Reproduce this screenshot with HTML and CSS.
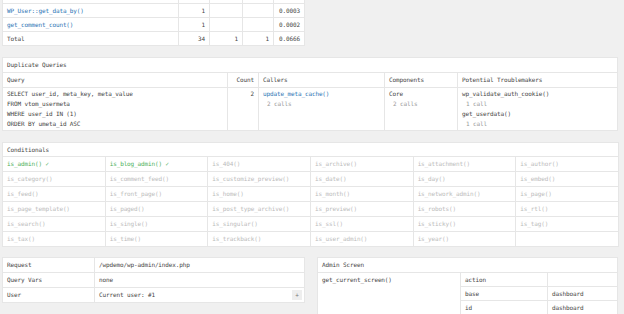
FILE: index.html
```html
<!DOCTYPE html>
<html lang="en">
<head>
    <meta charset="UTF-8">
    <title>Query Monitor</title>
    <link rel="stylesheet" href="styles.css">
</head>
<body>
    <div class="qm">
        <table class="panel callers-table">
            <colgroup>
                <col style="width: 176px">
                <col style="width: 31px">
                <col style="width: 33px">
                <col style="width: 31px">
                <col>
            </colgroup>
            <tbody>
                <tr class="scrolled">
                    <td></td>
                    <td></td>
                    <td></td>
                    <td></td>
                    <td></td>
                </tr>
                <tr>
                    <td><a href="#">WP_User::get_data_by()</a></td>
                    <td class="num">1</td>
                    <td></td>
                    <td></td>
                    <td class="num">0.0003</td>
                </tr>
                <tr>
                    <td><a href="#">get_comment_count()</a></td>
                    <td class="num">1</td>
                    <td></td>
                    <td></td>
                    <td class="num">0.0002</td>
                </tr>
                <tr>
                    <td>Total</td>
                    <td class="num">34</td>
                    <td class="num">1</td>
                    <td class="num">1</td>
                    <td class="num">0.0666</td>
                </tr>
            </tbody>
        </table>

        <table class="panel dupes">
            <colgroup>
                <col style="width: 225px">
                <col style="width: 31px">
                <col style="width: 126px">
                <col style="width: 73px">
                <col>
            </colgroup>
            <thead>
                <tr><th colspan="5" class="caption">Duplicate Queries</th></tr>
                <tr>
                    <th>Query</th>
                    <th class="num">Count</th>
                    <th>Callers</th>
                    <th>Components</th>
                    <th>Potential Troublemakers</th>
                </tr>
            </thead>
            <tbody>
                <tr>
                    <td class="sql">SELECT user_id, meta_key, meta_value<br>FROM vtom_usermeta<br>WHERE user_id IN (1)<br>ORDER BY umeta_id ASC</td>
                    <td class="sql num">2</td>
                    <td class="sql"><a href="#">update_meta_cache()</a><br><span class="calls">2 calls</span></td>
                    <td class="sql">Core<br><span class="calls">2 calls</span></td>
                    <td class="sql">wp_validate_auth_cookie()<br><span class="calls">1 call</span><br>get_userdata()<br><span class="calls">1 call</span></td>
                </tr>
            </tbody>
        </table>

        <table class="panel conditionals">
            <thead>
                <tr><th colspan="6" class="caption">Conditionals</th></tr>
            </thead>
            <tbody>
                <tr>
                    <td class="true">is_admin() ✓</td>
                    <td class="true">is_blog_admin() ✓</td>
                    <td>is_404()</td>
                    <td>is_archive()</td>
                    <td>is_attachment()</td>
                    <td>is_author()</td>
                </tr>
                <tr>
                    <td>is_category()</td>
                    <td>is_comment_feed()</td>
                    <td>is_customize_preview()</td>
                    <td>is_date()</td>
                    <td>is_day()</td>
                    <td>is_embed()</td>
                </tr>
                <tr>
                    <td>is_feed()</td>
                    <td>is_front_page()</td>
                    <td>is_home()</td>
                    <td>is_month()</td>
                    <td>is_network_admin()</td>
                    <td>is_page()</td>
                </tr>
                <tr>
                    <td>is_page_template()</td>
                    <td>is_paged()</td>
                    <td>is_post_type_archive()</td>
                    <td>is_preview()</td>
                    <td>is_robots()</td>
                    <td>is_rtl()</td>
                </tr>
                <tr>
                    <td>is_search()</td>
                    <td>is_single()</td>
                    <td>is_singular()</td>
                    <td>is_ssl()</td>
                    <td>is_sticky()</td>
                    <td>is_tag()</td>
                </tr>
                <tr>
                    <td>is_tax()</td>
                    <td>is_time()</td>
                    <td>is_trackback()</td>
                    <td>is_user_admin()</td>
                    <td>is_year()</td>
                    <td></td>
                </tr>
            </tbody>
        </table>

        <div class="bottom">
            <table class="panel request">
                <colgroup>
                    <col style="width: 92px">
                    <col>
                </colgroup>
                <tbody>
                    <tr><td>Request</td><td>/wpdemo/wp-admin/index.php</td></tr>
                    <tr><td>Query Vars</td><td>none</td></tr>
                    <tr>
                        <td>User</td>
                        <td><div class="user-row"><span>Current user: #1</span><span class="toggle">+</span></div></td>
                    </tr>
                </tbody>
            </table>

            <table class="panel screen">
                <colgroup>
                    <col style="width: 143px">
                    <col style="width: 87px">
                    <col>
                </colgroup>
                <thead>
                    <tr><th colspan="3" class="caption">Admin Screen</th></tr>
                </thead>
                <tbody>
                    <tr>
                        <td rowspan="3">get_current_screen()</td>
                        <td>action</td>
                        <td></td>
                    </tr>
                    <tr><td>base</td><td>dashboard</td></tr>
                    <tr><td>id</td><td>dashboard</td></tr>
                </tbody>
            </table>
        </div>
    </div>
</body>
</html>
```

FILE: styles.css
```css
* {
    margin: 0;
    padding: 0;
    box-sizing: border-box;
}

body {
    background-color: #f0f0f0;
    font-family: 'DejaVu Sans Mono', 'Liberation Mono', monospace;
    font-size: 6px;
    letter-spacing: -0.12px;
    color: #444;
    overflow: hidden;
}

.qm {
    padding-left: 2px;
}

a {
    color: #2a74b4;
    text-decoration: none;
}

.panel {
    background: #fff;
    border-collapse: collapse;
    table-layout: fixed;
}

.panel td,
.panel th {
    border: 1px solid #e6e6e6;
    padding: 3px 4px;
    line-height: 8px;
    font-weight: normal;
    text-align: left;
    vertical-align: top;
    white-space: nowrap;
    overflow: hidden;
}

.panel .num {
    text-align: right;
}

.panel .caption {
    color: #444;
}

/* caller totals */
.callers-table {
    width: 303px;
    margin-top: -11px;
}

.callers-table td {
    line-height: 7px;
}

.callers-table .scrolled td {
    height: 14px;
}

/* duplicate queries */
.dupes {
    width: 616px;
    margin-top: 11px;
}

.dupes td.sql {
    line-height: 10px;
    padding-top: 1px;
    padding-bottom: 1px;
}

.calls {
    color: #999;
    padding-left: 4px;
}

/* conditionals */
.conditionals {
    width: 617px;
    margin-top: 11px;
}

.conditionals .caption {
    padding-bottom: 2px;
}

.conditionals td {
    color: #bbb;
}

.conditionals td.true {
    color: #4cb05a;
}

/* request + admin screen */
.bottom {
    display: flex;
    align-items: flex-start;
    gap: 12px;
    margin-top: 10px;
}

.request {
    width: 303px;
}

.user-row {
    display: flex;
    justify-content: space-between;
    align-items: center;
}

.toggle {
    display: block;
    width: 10px;
    height: 10px;
    line-height: 10px;
    margin: -1px -2px -1px 0;
    text-align: center;
    background: #eee;
    color: #777;
}

.screen {
    width: 301px;
}

.screen tbody td {
    padding-bottom: 2px;
}
```
